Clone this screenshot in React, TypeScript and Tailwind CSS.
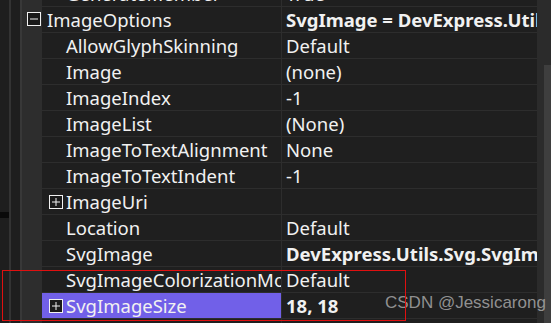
import React from "react";

type Row = {
  name: string;
  value: string;
  bold?: boolean;
  level: 0 | 1;
  box?: "plus" | "minus";
  selected?: boolean;
};

const rows: Row[] = [
  { name: "GenerateMember", value: "True", level: 1 },
  { name: "ImageOptions", value: "SvgImage = DevExpress.Utils.Svg.SvgImage", bold: true, level: 0, box: "minus" },
  { name: "AllowGlyphSkinning", value: "Default", level: 1 },
  { name: "Image", value: "(none)", level: 1 },
  { name: "ImageIndex", value: "-1", level: 1 },
  { name: "ImageList", value: "(None)", level: 1 },
  { name: "ImageToTextAlignment", value: "None", level: 1 },
  { name: "ImageToTextIndent", value: "-1", level: 1 },
  { name: "ImageUri", value: "", level: 1, box: "plus" },
  { name: "Location", value: "Default", level: 1 },
  { name: "SvgImage", value: "DevExpress.Utils.Svg.SvgImage", bold: true, level: 1 },
  { name: "SvgImageColorizationMode", value: "Default", level: 1 },
  { name: "SvgImageSize", value: "18, 18", bold: true, level: 1, box: "plus", selected: true },
  { name: "", value: "", level: 1 },
];

function Box({ kind }: { kind: "plus" | "minus" }) {
  return (
    <svg width="14" height="14" viewBox="0 0 14 14" className="shrink-0">
      <rect x="0.5" y="0.5" width="13" height="13" fill="#1a1a1a" stroke="#f1f1f1" />
      <line x1="3" y1="7" x2="11" y2="7" stroke="#f1f1f1" />
      {kind === "plus" && <line x1="7" y1="3" x2="7" y2="11" stroke="#f1f1f1" />}
    </svg>
  );
}

export default function App() {
  return (
    <div
      className="relative w-[551px] h-[323px] overflow-hidden bg-[#1f1f1f] flex text-[#f1f1f1]"
      style={{ fontFamily: '"Noto Sans", "Open Sans", sans-serif' }}
    >
      <div className="w-[9px] h-full bg-[#1e1e1e] flex flex-col">
        <div className="h-[212px]" />
        <div className="h-[6px] bg-[#0a0a0a]" />
      </div>
      <div className="w-[2px] h-full bg-[#333333]" />
      <div className="w-[9px] h-full bg-[#1e1e1e]" />
      <div className="w-[2px] h-full bg-[#383838]" />
      <div className="w-[515px] h-full flex flex-col -mt-[20px]">
        {rows.map((r, i) => (
          <div key={i} className="flex h-[26px] shrink-0">
            <div className="w-[20px] bg-[#2d2d2d] flex items-center justify-end pr-[1px]">
              {r.level === 0 && r.box && <Box kind={r.box} />}
            </div>
            <div className="w-[495px] flex border-t border-[#2d2d2d]">
              <div
                className={`w-[240px] shrink-0 border-r border-[#2d2d2d] flex items-center overflow-hidden whitespace-nowrap ${
                  r.selected ? "bg-[#7160e8]" : ""
                } ${r.level === 0 ? "pl-[5px]" : "pl-[7px]"}`}
              >
                {r.level === 1 && (
                  <div className="w-[17px] shrink-0 flex items-center">{r.box && <Box kind={r.box} />}</div>
                )}
                <span className="text-[18.5px] leading-none translate-y-[1px]">{r.name}</span>
              </div>
              <div className="flex-1 flex items-center pl-[4px] overflow-hidden whitespace-nowrap">
                <span className={`text-[18.5px] leading-none translate-y-[1px] ${r.bold ? "font-bold" : ""}`}>
                  {r.value}
                </span>
              </div>
            </div>
          </div>
        ))}
      </div>
      <div className="w-[7px] h-full bg-[#2b2b2b]" />
      <div className="w-[7px] h-full bg-[#2b2b2b] flex flex-col">
        <div className="h-[65px]" />
        <div className="flex-1 bg-[#3e3e3e]" />
      </div>
      <div
        className="absolute left-[385px] top-[294px] text-[17px] leading-none text-[#b0b0b0]/80"
        style={{ fontFamily: '"Liberation Sans", Arial, sans-serif' }}
      >
        CSDN @Jessicarong
      </div>
      <div className="absolute left-[2px] top-[270px] w-[404px] h-[51px] border border-[#e01010]" />
    </div>
  );
}
